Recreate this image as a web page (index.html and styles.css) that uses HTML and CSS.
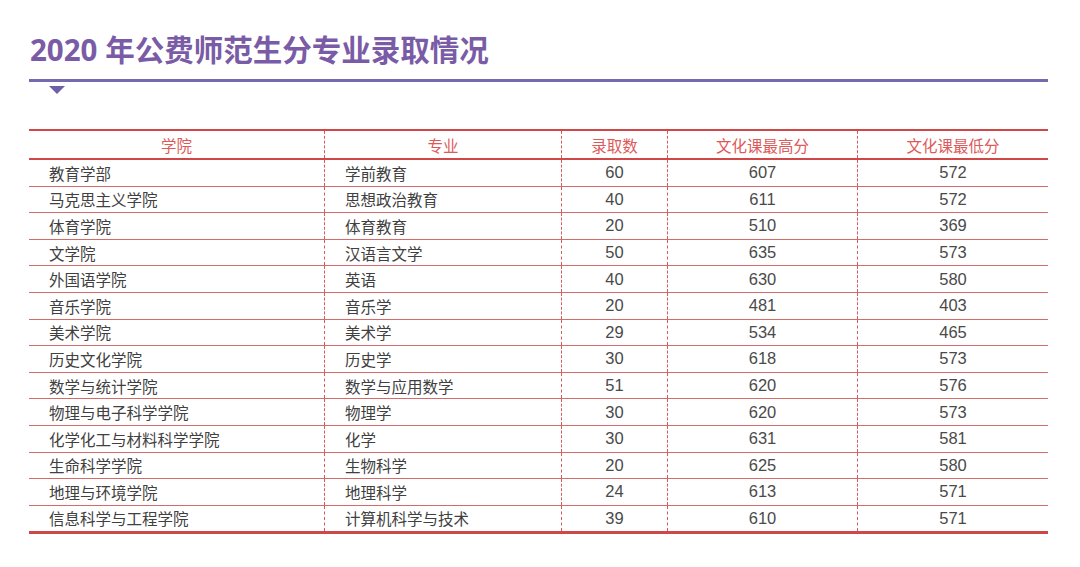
FILE: index.html
```html
<!DOCTYPE html>
<html lang="zh">
<head>
<meta charset="utf-8">
<title>2020 年公费师范生分专业录取情况</title>
<link rel="stylesheet" href="styles.css">
</head>
<body>
<div class="page">
  <header class="head">
    <h1 class="title">2020 年公费师范生分专业录取情况</h1>
    <div class="rule"></div>
    <div class="tri"></div>
  </header>
  <div class="table">
    <div class="row hrow">
      <div class="c">学院</div><div class="c">专业</div><div class="c">录取数</div><div class="c">文化课最高分</div><div class="c">文化课最低分</div>
    </div>
    <div class="row"><div class="c l">教育学部</div><div class="c l">学前教育</div><div class="c n">60</div><div class="c n">607</div><div class="c n">572</div></div>
    <div class="row"><div class="c l">马克思主义学院</div><div class="c l">思想政治教育</div><div class="c n">40</div><div class="c n">611</div><div class="c n">572</div></div>
    <div class="row"><div class="c l">体育学院</div><div class="c l">体育教育</div><div class="c n">20</div><div class="c n">510</div><div class="c n">369</div></div>
    <div class="row"><div class="c l">文学院</div><div class="c l">汉语言文学</div><div class="c n">50</div><div class="c n">635</div><div class="c n">573</div></div>
    <div class="row"><div class="c l">外国语学院</div><div class="c l">英语</div><div class="c n">40</div><div class="c n">630</div><div class="c n">580</div></div>
    <div class="row"><div class="c l">音乐学院</div><div class="c l">音乐学</div><div class="c n">20</div><div class="c n">481</div><div class="c n">403</div></div>
    <div class="row"><div class="c l">美术学院</div><div class="c l">美术学</div><div class="c n">29</div><div class="c n">534</div><div class="c n">465</div></div>
    <div class="row"><div class="c l">历史文化学院</div><div class="c l">历史学</div><div class="c n">30</div><div class="c n">618</div><div class="c n">573</div></div>
    <div class="row"><div class="c l">数学与统计学院</div><div class="c l">数学与应用数学</div><div class="c n">51</div><div class="c n">620</div><div class="c n">576</div></div>
    <div class="row"><div class="c l">物理与电子科学学院</div><div class="c l">物理学</div><div class="c n">30</div><div class="c n">620</div><div class="c n">573</div></div>
    <div class="row"><div class="c l">化学化工与材料科学学院</div><div class="c l">化学</div><div class="c n">30</div><div class="c n">631</div><div class="c n">581</div></div>
    <div class="row"><div class="c l">生命科学学院</div><div class="c l">生物科学</div><div class="c n">20</div><div class="c n">625</div><div class="c n">580</div></div>
    <div class="row"><div class="c l">地理与环境学院</div><div class="c l">地理科学</div><div class="c n">24</div><div class="c n">613</div><div class="c n">571</div></div>
    <div class="row last"><div class="c l">信息科学与工程学院</div><div class="c l">计算机科学与技术</div><div class="c n">39</div><div class="c n">610</div><div class="c n">571</div></div>
  </div>
</div>
</body>
</html>
```
FILE: styles.css
```css
html, body {
  margin: 0;
  padding: 0;
  background: #ffffff;
}
body {
  font-family: "Liberation Sans", "Noto Sans CJK SC", sans-serif;
  color: #404040;
}
.page {
  width: 1080px;
  height: 567px;
  padding: 0 32px 0 29px;
  box-sizing: border-box;
}
.head {
  padding-top: 30px;
}
.title {
  margin: 0 0 0 1px;
  font-family: "Open Sans", "Noto Sans CJK SC", sans-serif;
  font-weight: 700;
  font-size: 29.5px;
  line-height: 40px;
  color: #7a5ca6;
  letter-spacing: 0;
}
.rule {
  margin-top: 9px;
  height: 3px;
  background: #7669b0;
}
.tri {
  margin: 4px 0 0 20px;
  width: 0;
  height: 0;
  border-left: 8.5px solid transparent;
  border-right: 8.5px solid transparent;
  border-top: 8px solid #6f5fa8;
}
.table {
  margin-top: 35px;
  border-top: 2px solid #cf4747;
}
.row {
  display: grid;
  grid-template-columns: 296px 237px 106px 190px 190px;
  height: 26.6px;
  border-bottom: 1px solid #d46a6a;
  box-sizing: border-box;
}
.hrow {
  height: 29px;
  border-bottom: 2px solid #cf4747;
}
.row.last {
  height: 28px;
  border-bottom: 3px solid #cf4747;
}
.c {
  display: flex;
  align-items: center;
  justify-content: center;
  font-size: 15.5px;
  border-right: 1px dashed #d65a5a;
}
.c:last-child {
  border-right: none;
}
.hrow .c {
  color: #dd5a5a;
  font-size: 15.5px;
}
.c.l {
  justify-content: flex-start;
  padding-left: 20px;
}
.c.n {
  font-size: 16.5px;
  color: #4a4a4a;
}
```
